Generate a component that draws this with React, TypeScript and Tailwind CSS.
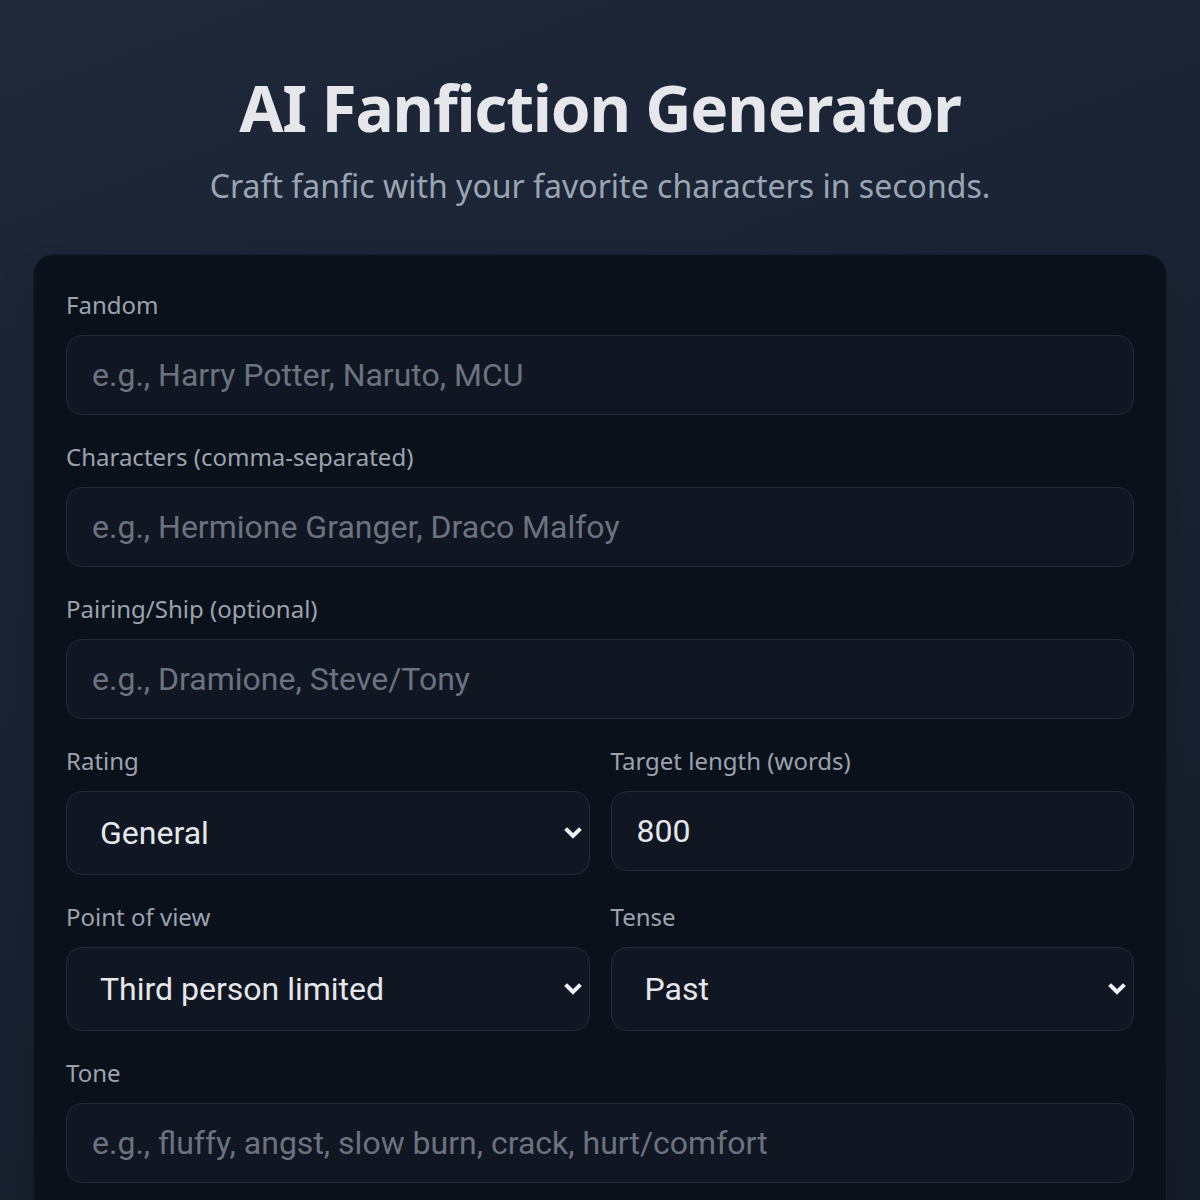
import React from "react";

const labelCls = "block text-[24px] leading-9 mb-3 text-[#9ca3af] font-['Noto_Sans',sans-serif]";
const inputCls =
  "w-full h-[80px] rounded-2xl border border-[#232b38] bg-[#111722] px-[25px] text-[32px] text-[#e5e7eb] placeholder:text-[#6b7280] outline-none font-['Roboto',sans-serif]";
const selectCls =
  "w-full h-[84px] appearance-none rounded-2xl border border-[#232b38] bg-[#111722] pl-[33px] pr-12 text-[32px] text-[#e5e7eb] outline-none font-['Roboto',sans-serif]";

function Chevron() {
  return (
    <svg
      className="pointer-events-none absolute right-[7px] top-1/2 -translate-y-1/2"
      width="20"
      height="16"
      viewBox="0 0 20 16"
      fill="none"
      stroke="#eef0f4"
      strokeWidth="4"
      strokeLinecap="square"
      strokeLinejoin="miter"
    >
      <polyline points="4 5 10 11 16 5" />
    </svg>
  );
}

function Field({ label, placeholder }: { label: string; placeholder: string }) {
  return (
    <div>
      <label className={labelCls}>{label}</label>
      <input className={inputCls} placeholder={placeholder} />
    </div>
  );
}

function SelectField({ label, value, options }: { label: string; value: string; options: string[] }) {
  return (
    <div>
      <label className={labelCls}>{label}</label>
      <div className="relative">
        <select className={selectCls} defaultValue={value}>
          {options.map((o) => (
            <option key={o}>{o}</option>
          ))}
        </select>
        <Chevron />
      </div>
    </div>
  );
}

export default function App() {
  return (
    <div className="min-h-screen bg-[linear-gradient(160deg,#1e2839_0%,#1a2232_50%,#141b27_100%)] px-[34px] pt-[76px] pb-16">
      {/* Header */}
      <div className="text-center">
        <h1 className="text-[64px] leading-none font-bold tracking-[-0.019em] text-[#e5e7eb] font-['Noto_Sans',sans-serif]">
          AI Fanfiction Generator
        </h1>
        <p className="mt-[30px] text-[32px] leading-none text-[#9aa5b4] font-['Noto_Sans',sans-serif]">
          Craft fanfic with your favorite characters in seconds.
        </p>
      </div>

      {/* Form card */}
      <div className="mt-[53px] rounded-[20px] bg-[#0b111b] ring-1 ring-[#161d29] px-8 pt-8 pb-10 shadow-2xl">
        <div className="space-y-6">
          <Field label="Fandom" placeholder="e.g., Harry Potter, Naruto, MCU" />
          <Field label="Characters (comma-separated)" placeholder="e.g., Hermione Granger, Draco Malfoy" />
          <Field label="Pairing/Ship (optional)" placeholder="e.g., Dramione, Steve/Tony" />

          <div className="grid grid-cols-2 gap-x-[21px] items-start">
            <SelectField label="Rating" value="General" options={["General", "Teen", "Mature"]} />
            <div>
              <label className={labelCls}>Target length (words)</label>
              <input type="number" className={inputCls} defaultValue={800} />
            </div>
          </div>

          <div className="grid grid-cols-2 gap-x-[21px] items-start">
            <SelectField
              label="Point of view"
              value="Third person limited"
              options={["First person", "Second person", "Third person limited", "Third person omniscient"]}
            />
            <SelectField label="Tense" value="Past" options={["Past", "Present"]} />
          </div>

          <Field label="Tone" placeholder="e.g., fluffy, angst, slow burn, crack, hurt/comfort" />
        </div>
      </div>
    </div>
  );
}
